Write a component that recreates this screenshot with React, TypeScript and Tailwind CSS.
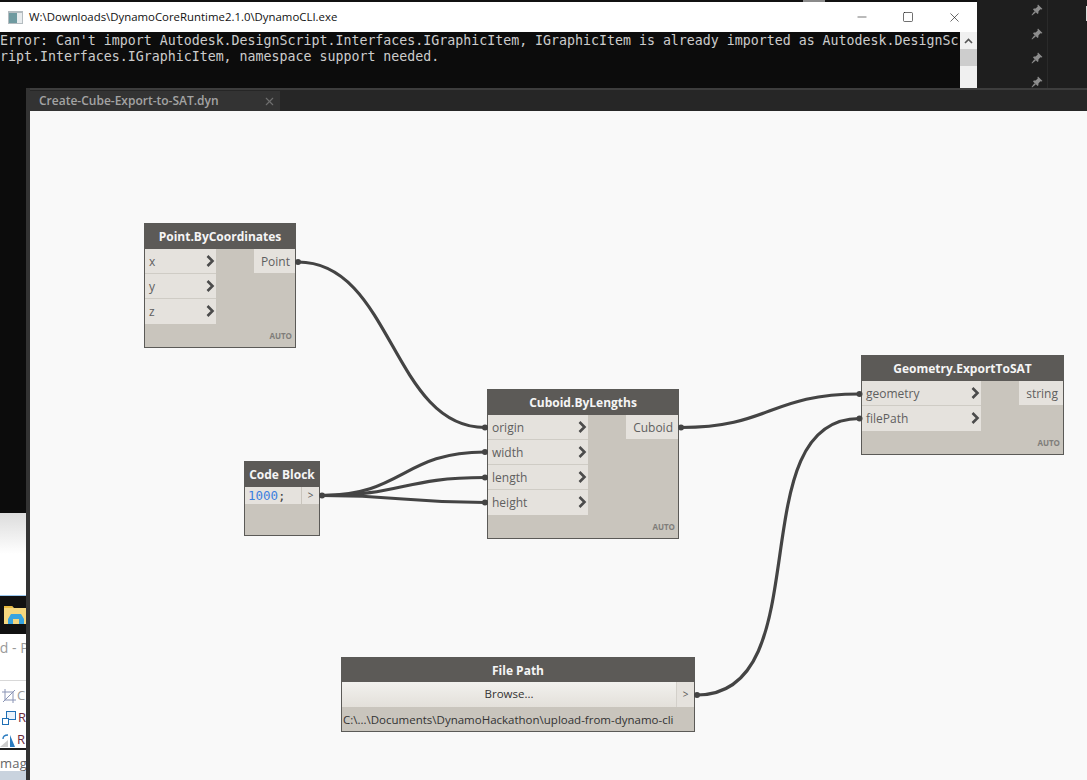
import React from "react";
import { Minus, Square, X } from "lucide-react";

const sans = "font-['Open_Sans','Noto_Sans',sans-serif]";

function Chevron() {
  return (
    <svg width="9" height="12" viewBox="0 0 9 12" className="shrink-0">
      <path d="M1.5 1 L6.5 6 L1.5 11" fill="none" stroke="#4b4b4b" strokeWidth="2.6" />
    </svg>
  );
}

function InPort({ label, last }: { label: string; last?: boolean }) {
  return (
    <div className={`flex h-[25px] items-center justify-between border-b bg-[#e5e2dd] pr-[1px] pl-[4px] text-[12px] text-[#5f5f5f] ${last ? "border-transparent" : "border-[#cfccc5]"}`}>
      <span className="pt-[2px]">{label}</span>
      <Chevron />
    </div>
  );
}

function Node({
  title, x, y, w, h, inputs, inW, output, outW,
}: {
  title: string; x: number; y: number; w: number; h: number; inputs: string[]; inW: number; output: string; outW: number;
}) {
  return (
    <div
      className={`absolute flex flex-col border border-[#5b5a57] bg-[#c9c5bd] ${sans}`}
      style={{ left: x, top: y, width: w, height: h }}
    >
      <div className="flex h-[25px] shrink-0 items-center justify-center bg-[#5c5a57] text-[12px] font-bold text-[#f5f5f5]">{title}</div>
      <div className="flex flex-1 items-start justify-between">
        <div style={{ width: inW }}>
          {inputs.map((p, i) => (
            <InPort key={p} label={p} last={i === inputs.length - 1} />
          ))}
        </div>
        <div className="flex h-[24px] items-center justify-end bg-[#e5e2dd] pt-[2px] pr-[5px] text-[12px] text-[#5f5f5f]" style={{ width: outW }}>
          {output}
        </div>
      </div>
      <div className="absolute right-[3px] bottom-[5px] text-[8px] leading-[12px] font-bold text-[#7f7d7a]">AUTO</div>
    </div>
  );
}

function PinIcon() {
  return (
    <svg width="12" height="12" viewBox="0 0 12 12">
      <g fill="#8d8d8d">
        <path d="M7 0.5 L11.5 5 L10.3 5.6 L9.4 5.2 L7.4 7.4 L7.4 9.2 L6.6 10 L2 5.4 L2.8 4.6 L4.6 4.6 L6.8 2.6 L6.4 1.7 Z" />
        <path d="M3.4 7.2 L4.8 8.6 L1 11.4 L0.6 11 Z" />
      </g>
    </svg>
  );
}

const wires = [
  "M298 262 C392 262 392 427.5 485 427.5",
  "M681 427.5 C770 427.5 770 394 859.5 394",
  "M322 495.5 C403 495.5 403 452 485 452",
  "M322 495.5 C403 495.5 403 477.5 485 477.5",
  "M322 495.5 C403 495.5 403 502.5 485 502.5",
  "M697 695 C822 695 738 418.5 859.5 418.5",
];

const nubs: [number, number][] = [
  [298, 262], [485, 427.5], [681, 427.5], [859.5, 394], [322, 495.5], [485, 452], [485, 477.5], [485, 502.5], [697, 695], [859.5, 418.5],
];

export default function App() {
  return (
    <div className="relative h-[780px] w-[1087px] overflow-hidden bg-[#1e1e1e]">
      {/* desktop strip behind the windows */}
      <div className="absolute top-0 left-0 h-[2px] w-[977px] bg-[#111]" />
      <div className="absolute top-0 left-[803px] h-[2px] w-[22px] bg-[#8a8a8a]" />
      <div className="absolute top-0 left-[977px] flex h-[88px] w-[110px] flex-col items-center gap-[12px] pt-[4px] pl-[10px]">
        <PinIcon />
        <PinIcon />
        <PinIcon />
        <PinIcon />
      </div>
      <div className="absolute top-0 left-[1047px] h-[88px] w-[1px] bg-[#2a2a2a]" />
      <div className="absolute top-[6px] left-[1086px] h-[15px] w-[1px] bg-[#ddd]" />

      {/* left: what shows of other windows */}
      <div className={`absolute top-[88px] left-0 flex h-[692px] w-[26px] flex-col ${sans}`}>
        <div className="h-[425px] bg-[#0c0c0c]" />
        <div className="h-[82px] bg-gradient-to-b from-[#dcdcdc] via-white to-white" />
        <div className="h-[1px] bg-[#9cc8ee]" />
        <div className="flex h-[38px] items-center justify-end bg-[#111]">
          <svg width="22" height="20" viewBox="0 0 22 20">
            <path d="M0 1 H8 L10 3 H22 V19 H0 Z" fill="#f5d77e" />
            <path d="M0 1 H8 L9 3 H0 Z" fill="#e8b93f" />
            <path d="M4 14 L7 9 H17 L20 14 V19 H15 V14 H9 V19 H4 Z" fill="#38a4e0" />
          </svg>
        </div>
        <div className="h-[46px] overflow-hidden bg-white pt-[3px] text-[14px] whitespace-nowrap text-[#999]">
          <div className="-ml-[8px]">ed - P</div>
        </div>
        <div className="h-[1px] bg-[#d8d8d8]" />
        <div className="flex flex-col gap-[6px] bg-white pt-[7px]">
          <div className="flex h-[16px] items-center gap-[1px] overflow-hidden pl-[2px] text-[13px] text-[#999]">
            <svg width="14" height="14" viewBox="0 0 14 14" className="shrink-0">
              <path d="M3 0 V11 H14 M0 3 H11 V14 M1 13 L13 1" fill="none" stroke="#8a94b5" strokeWidth="1" />
            </svg>
            <span>C</span>
          </div>
          <div className="flex h-[16px] items-center gap-[2px] overflow-hidden pl-[2px] text-[13px] text-[#6a2a3a]">
            <svg width="14" height="14" viewBox="0 0 14 14" className="shrink-0">
              <rect x="4.5" y="0.5" width="9" height="8" fill="#e8f2fb" stroke="#1f6fb5" />
              <rect x="0.5" y="7.5" width="6" height="6" fill="#fff" stroke="#1f6fb5" />
            </svg>
            <span>R</span>
          </div>
          <div className="flex h-[16px] items-center gap-[1px] overflow-hidden text-[13px] text-[#6a2a3a]">
            <svg width="16" height="14" viewBox="0 0 16 14" className="shrink-0">
              <path d="M0 14 L8 7 V14 Z" fill="#ccc" />
              <path d="M10 2 L15 14 H10 Z" fill="#2b7cc0" />
              <path d="M3 6 C3 3 5 2 8 2" fill="none" stroke="#2b7cc0" strokeWidth="1.4" />
            </svg>
            <span>R</span>
          </div>
        </div>
        <div className="mt-[2px] overflow-hidden bg-white pt-[6px] pb-[1px] text-[13px] leading-[14px] tracking-[0.3px] whitespace-nowrap text-[#666]">mage</div>
        <div className="flex-1 bg-[#c9d3de]" />
      </div>

      {/* console window */}
      <div className="absolute top-[2px] left-0 flex h-[86px] w-[977px] flex-col">
        <div className={`flex h-[30px] shrink-0 items-center bg-white ${sans}`}>
          <svg width="15" height="13" viewBox="0 0 15 13" className="mr-[6px] ml-[8px] shrink-0">
            <rect width="15" height="13" fill="#b4bcc0" />
            <rect x="1" y="2" width="8" height="10" fill="#6f9aa0" />
            <rect x="9" y="2" width="5" height="10" fill="#e8ecee" />
          </svg>
          <span className="flex-1 text-[11.4px] text-[#111]">W:\Downloads\DynamoCoreRuntime2.1.0\DynamoCLI.exe</span>
          <div className="flex w-[138px] items-center text-[#111]">
            <div className="flex w-[46px] justify-center"><Minus size={14} strokeWidth={1} /></div>
            <div className="flex w-[46px] justify-center"><Square size={12} strokeWidth={1.2} /></div>
            <div className="flex w-[46px] justify-center"><X size={15} strokeWidth={1} /></div>
          </div>
        </div>
        <div className="flex flex-1">
          <div className="flex-1 overflow-hidden bg-[#0c0c0c] pt-[1px] font-['DejaVu_Sans_Mono',monospace] text-[13.28px] leading-[16px] text-[#cccccc]">
            <div className="whitespace-nowrap">Error: Can't import Autodesk.DesignScript.Interfaces.IGraphicItem, IGraphicItem is already imported as Autodesk.DesignSc</div>
            <div className="whitespace-nowrap">ript.Interfaces.IGraphicItem, namespace support needed.</div>
          </div>
          <div className="flex w-[17px] flex-col bg-[#f0f0f0]">
            <div className="flex h-[17px] items-center justify-center">
              <svg width="9" height="6" viewBox="0 0 9 6"><path d="M1 5 L4.5 1.5 L8 5" fill="none" stroke="#555" strokeWidth="1.6" /></svg>
            </div>
            <div className="h-[17px] bg-[#cdcdcd]" />
          </div>
        </div>
      </div>

      {/* Dynamo window */}
      <div className="absolute top-[88px] left-[26px] flex h-[692px] w-[1061px] flex-col bg-[#333] pl-[4px]">
        <div className={`flex h-[23px] shrink-0 items-end border-t-2 border-[#3d3d3d] bg-[#262626] ${sans}`}>
          <div className="flex h-[20px] w-[250px] items-center justify-between bg-[#333] pr-[4px] pl-[9px]">
            <span className="text-[12px] font-semibold text-[#a3a3a3]">Create-Cube-Export-to-SAT.dyn</span>
            <X size={13} strokeWidth={2} className="text-[#6f6f6f]" />
          </div>
        </div>
        <div className="flex-1 bg-[#f9f9f9]" />
      </div>

      {/* graph nodes */}
      <Node title="Point.ByCoordinates" x={144} y={223} w={152} h={125} inputs={["x", "y", "z"]} inW={71} output="Point" outW={41} />
      <Node title="Cuboid.ByLengths" x={487} y={389} w={192} h={150} inputs={["origin", "width", "length", "height"]} inW={100} output="Cuboid" outW={52} />
      <Node title="Geometry.ExportToSAT" x={861} y={355} w={203} h={100} inputs={["geometry", "filePath"]} inW={119} output="string" outW={44} />

      <div className={`absolute top-[461px] left-[244px] flex h-[75px] w-[76px] flex-col border border-[#5b5a57] bg-[#c9c5bd] ${sans}`}>
        <div className="flex h-[25px] shrink-0 items-center justify-center bg-[#5c5a57] text-[12px] font-bold text-[#f5f5f5]">Code Block</div>
        <div className="flex h-[17px]">
          <div className="flex-1 bg-[#e5e2dd] pl-[3px] font-['DejaVu_Sans_Mono',monospace] text-[12.5px] leading-[17px] text-[#3b7fe0]">
            1000<span className="text-[#444]">;</span>
          </div>
          <div className="flex w-[18px] items-center justify-center border-l border-[#c9c5bd] bg-[#e5e2dd] text-[10px] text-[#555]">&gt;</div>
        </div>
      </div>

      <div className={`absolute top-[657px] left-[341px] flex h-[75px] w-[354px] flex-col border border-[#5b5a57] bg-[#c9c5bd] ${sans}`}>
        <div className="flex h-[24px] shrink-0 items-center justify-center bg-[#5c5a57] pt-[2px] text-[12px] font-bold text-[#f5f5f5]">File Path</div>
        <div className="flex h-[25px] shrink-0">
          <div className="flex flex-1 items-center justify-center bg-gradient-to-b from-[#f2f1ee] to-[#e3e0da] pb-[2px] text-[11.5px] text-[#333]">Browse...</div>
          <div className="flex w-[18px] items-center justify-center border-l border-[#d3d0ca] bg-[#e5e2dd] text-[10px] text-[#555]">&gt;</div>
        </div>
        <div className="flex flex-1 items-center pt-[2px] pl-[1px] text-[11.5px] whitespace-nowrap text-[#333]">C:\...\Documents\DynamoHackathon\upload-from-dynamo-cli</div>
      </div>

      {/* connectors */}
      <svg className="pointer-events-none absolute top-0 left-0" width="1087" height="780" viewBox="0 0 1087 780">
        {wires.map((d) => (
          <path key={d} d={d} fill="none" stroke="#444444" strokeWidth="3.2" />
        ))}
        {nubs.map(([cx, cy]) => (
          <circle key={`${cx}-${cy}`} cx={cx} cy={cy} r="3" fill="#444444" />
        ))}
      </svg>
    </div>
  );
}
